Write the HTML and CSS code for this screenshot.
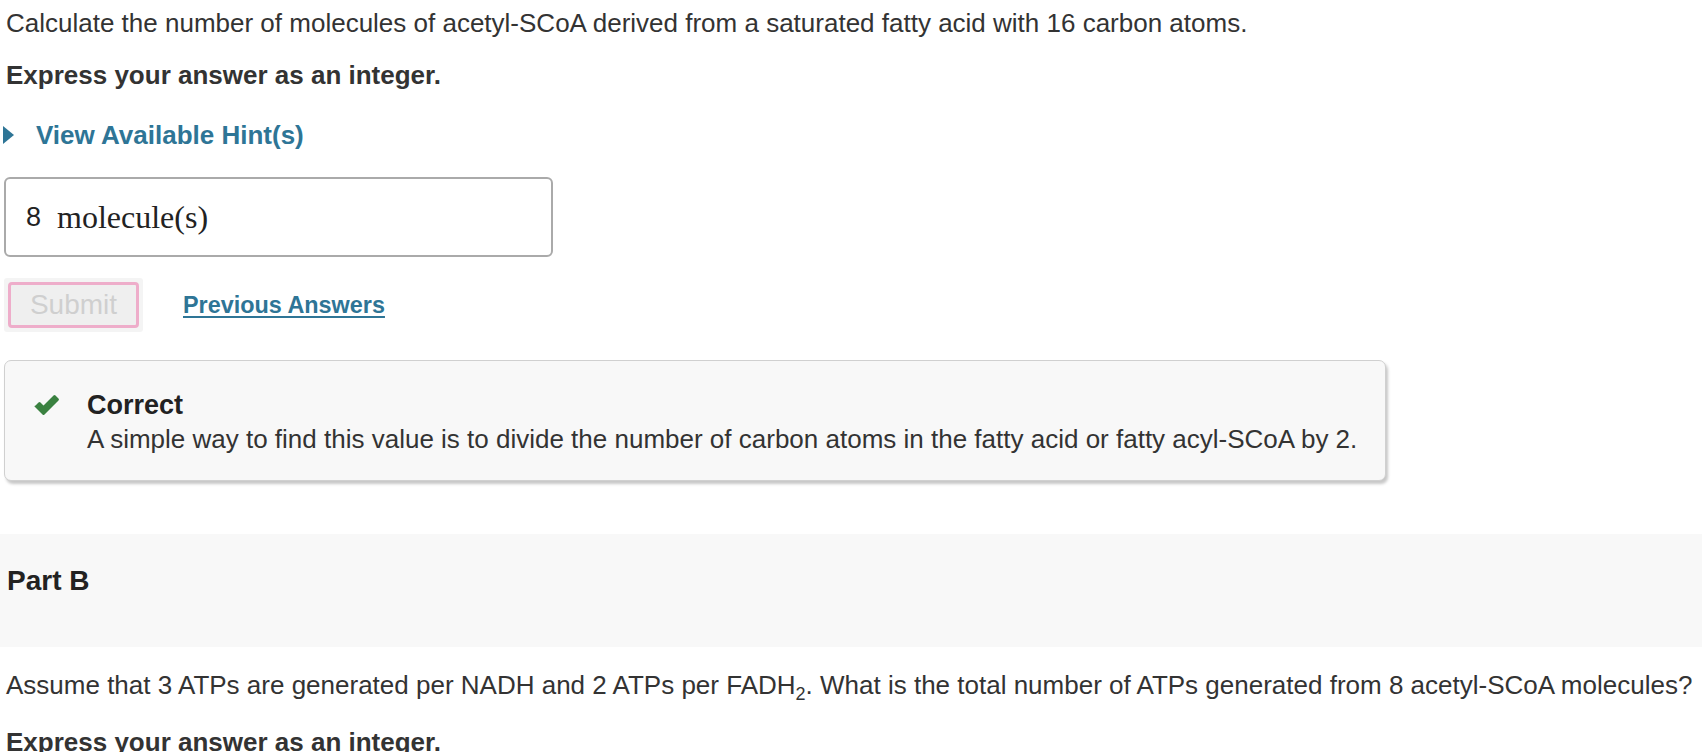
FILE: index.html
```html
<!DOCTYPE html>
<html lang="en">
<head>
    <meta charset="UTF-8">
    <title>Part A</title>
    <link rel="stylesheet" href="styles.css">
</head>
<body>
    <div class="part">
        <p class="question">Calculate the number of molecules of acetyl-SCoA derived from a saturated fatty acid with 16 carbon atoms.</p>
        <p class="instruction">Express your answer as an integer.</p>

        <div class="hint-toggle">
            <span class="hint-arrow"></span>
            <a href="#" class="hint-link">View Available Hint(s)</a>
        </div>

        <div class="answer-box">
            <span class="answer-value">8</span>
            <span class="answer-unit">molecule(s)</span>
        </div>

        <div class="actions">
            <div class="submit-wrap">
                <button class="submit-btn" disabled>Submit</button>
            </div>
            <a href="#" class="prev-link">Previous Answers</a>
        </div>

        <div class="feedback">
            <svg class="check-icon" width="27" height="22" viewBox="0 0 27 22">
                <path d="M2.5 11.5 L5.5 8.5 Q6.5 7.5 7.5 8.5 L10.5 11.5 L20.5 1.5 Q21.5 0.5 22.5 1.5 L25.5 4.5 Q26.5 5.5 25.5 6.5 L11.5 20.5 Q10.5 21.5 9.5 20.5 L1.5 12.5 Q1 12 2.5 11.5 Z" fill="#3a8140"/>
            </svg>
            <div class="feedback-text">
                <div class="feedback-title">Correct</div>
                <div>A simple way to find this value is to divide the number of carbon atoms in the fatty acid or fatty acyl-SCoA by 2.</div>
            </div>
        </div>
    </div>

    <div class="part-header">Part B</div>

    <div class="part part-b">
        <p class="question">Assume that 3 ATPs are generated per NADH and 2 ATPs per FADH<sub>2</sub>. What is the total number of ATPs generated from 8 acetyl-SCoA molecules?</p>
        <p class="instruction">Express your answer as an integer.</p>
    </div>
</body>
</html>
```

FILE: styles.css
```css
body {
    margin: 0;
    font-family: "Liberation Sans", Arial, sans-serif;
    font-size: 26px;
    color: #333;
    background: #fff;
}
.part {
    padding: 0 4px;
}
.question {
    margin: 0;
    padding: 8px 0 0 2px;
    line-height: 30px;
}
.instruction {
    margin: 22px 0 0;
    padding-left: 2px;
    line-height: 30px;
    font-weight: bold;
}
.hint-toggle {
    display: flex;
    align-items: center;
    margin-top: 30px;
    height: 30px;
}
.hint-arrow {
    width: 0;
    height: 0;
    margin-left: -1px;
    border-top: 9px solid transparent;
    border-bottom: 9px solid transparent;
    border-left: 11px solid #2e7596;
}
.hint-link {
    margin-left: 22px;
    color: #2e7596;
    font-weight: bold;
    font-size: 26px;
    text-decoration: none;
}
.answer-box {
    margin-top: 27px;
    width: 549px;
    height: 80px;
    box-sizing: border-box;
    border: 2px solid #aaa;
    border-radius: 6px;
    display: flex;
    align-items: center;
    padding-left: 20px;
    color: #222;
}
.answer-value {
    font-size: 27px;
}
.answer-unit {
    margin-left: 16px;
    font-family: "Liberation Serif", "DejaVu Serif", serif;
    font-size: 32px;
}
.actions {
    display: flex;
    align-items: center;
    margin-top: 21px;
}
.submit-wrap {
    width: 139px;
    height: 54px;
    box-sizing: border-box;
    padding: 4px;
    background: #f4f4f4;
    border-radius: 3px;
}
.submit-btn {
    width: 100%;
    height: 100%;
    box-sizing: border-box;
    border: 3px solid #eeadca;
    border-radius: 4px;
    background: #efefef;
    color: #cfcfcf;
    font-family: "Liberation Sans", Arial, sans-serif;
    font-size: 28px;
    padding: 0;
}
.prev-link {
    margin-left: 40px;
    color: #2e7596;
    font-weight: bold;
    font-size: 23.4px;
    text-decoration: underline;
    text-underline-offset: 3px;
}
.feedback {
    margin-top: 28px;
    width: 1382px;
    box-sizing: border-box;
    display: flex;
    align-items: flex-start;
    background: #f8f8f8;
    border: 1.5px solid #d0d0d0;
    border-radius: 7px;
    box-shadow: 2px 3px 3px #c8c8c8;
    padding: 27px 20px 24px 28px;
}
.check-icon {
    margin-top: 6px;
    flex-shrink: 0;
}
.feedback-text {
    margin-left: 27px;
    line-height: 34px;
}
.feedback-title {
    font-weight: bold;
    font-size: 27px;
    color: #222;
}
.part-header {
    margin-top: 53px;
    height: 113px;
    box-sizing: border-box;
    background: #f8f8f8;
    padding: 31px 7px 0;
    line-height: 32px;
    font-weight: bold;
    font-size: 28px;
    color: #222;
}
.part-b .question {
    padding-top: 23px;
}
.part-b .instruction {
    margin-top: 27px;
}
sub {
    font-size: 18px;
    line-height: 0;
}
```
